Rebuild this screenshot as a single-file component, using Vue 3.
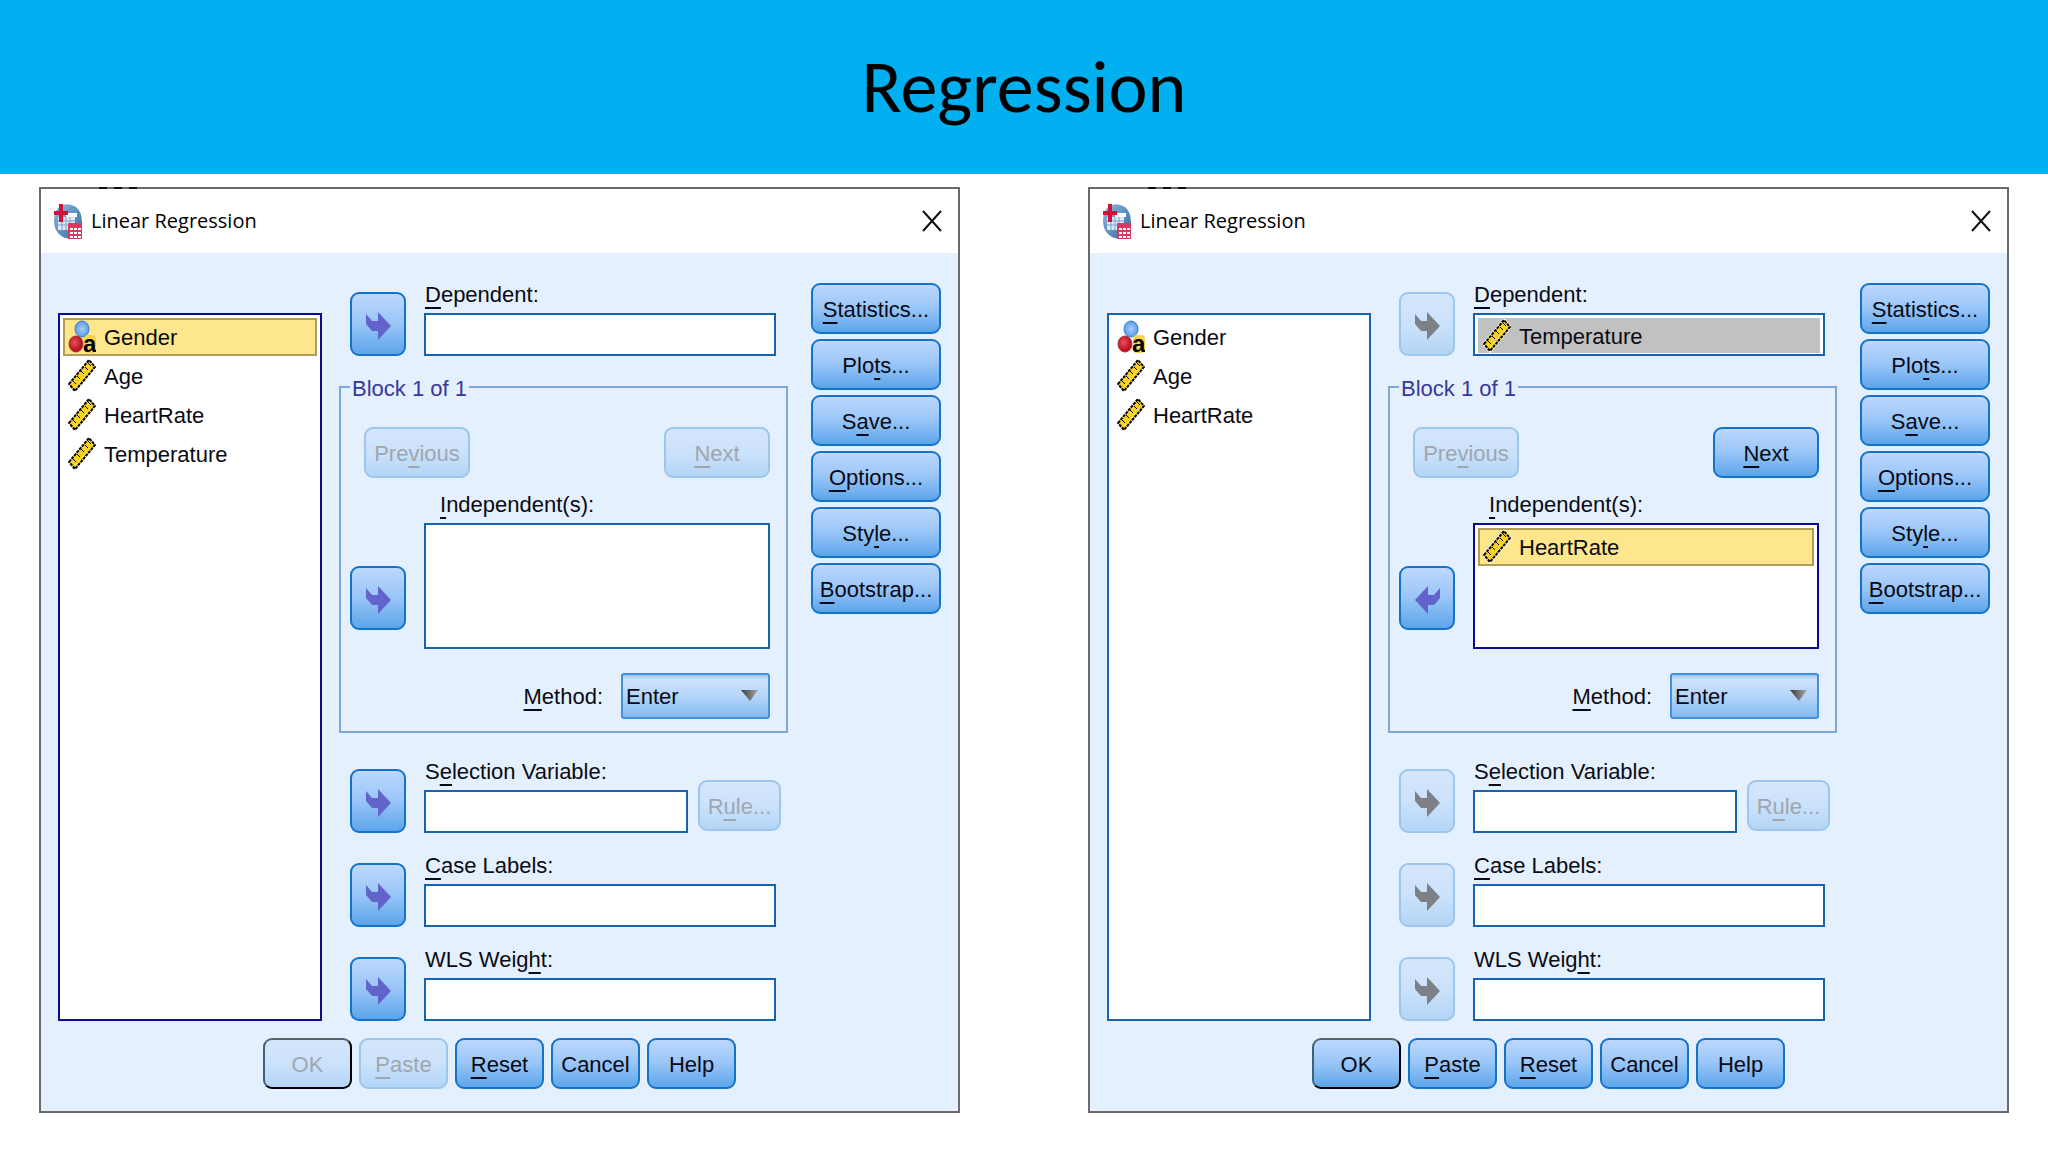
<script setup>
const sideButtons = [
  ['', 'S', 'tatistics...'],
  ['Plo', 't', 's...'],
  ['S', 'a', 've...'],
  ['', 'O', 'ptions...'],
  ['Sty', 'l', 'e...'],
  ['', 'B', 'ootstrap...'],
]

const dialogs = [
  {
    id: 'empty',
    variables: ['Gender', 'Age', 'HeartRate', 'Temperature'],
    selected: 'Gender',
    listActive: true,
    dependent: null,
    independents: [],
    assigned: false,
  },
  {
    id: 'filled',
    variables: ['Gender', 'Age', 'HeartRate'],
    selected: null,
    listActive: false,
    dependent: 'Temperature',
    independents: ['HeartRate'],
    assigned: true,
  },
]

const extraFields = [
  { key: 'selection', parts: ['S', 'e', 'lection Variable:'], rule: true },
  { key: 'cases', parts: ['', 'C', 'ase Labels:'], rule: false },
  { key: 'wls', parts: ['WLS Weig', 'h', 't:'], rule: false },
]

const footer = (d) => [
  { parts: ['OK', '', ''], disabled: !d.assigned, primary: true },
  { parts: ['', 'P', 'aste'], disabled: !d.assigned },
  { parts: ['', 'R', 'eset'] },
  { parts: ['Cancel', '', ''] },
  { parts: ['Help', '', ''] },
]

const arrowPath = 'M0 2 L6 9 L12 9 L12 0 L25 14 L12 28 L12 19 L6 19 L0 12 Z'
</script>

<template>
  <svg class="defs" aria-hidden="true">
    <defs>
      <linearGradient id="globe" x1="0" y1="0" x2="1" y2="1">
        <stop offset="0" stop-color="#8fb9de" />
        <stop offset="1" stop-color="#2f6ba5" />
      </linearGradient>
      <radialGradient id="ballBlue">
        <stop offset="0" stop-color="#a9cdfa" />
        <stop offset="1" stop-color="#5b9cea" />
      </radialGradient>
      <radialGradient id="ballRed" cx="0.4" cy="0.4">
        <stop offset="0" stop-color="#e8505a" />
        <stop offset="1" stop-color="#b8141f" />
      </radialGradient>
      <linearGradient id="caret" x1="0" y1="0" x2="1" y2="0">
        <stop offset="0" stop-color="#3c3c3c" />
        <stop offset="1" stop-color="#a8a8a8" />
      </linearGradient>
      <symbol id="nominal" viewBox="0 0 28 34">
        <ellipse cx="14" cy="9" rx="7" ry="8" fill="url(#ballBlue)" stroke="#3d7fd0" />
        <ellipse cx="8" cy="24" rx="7" ry="8" fill="url(#ballRed)" stroke="#a8323a" />
        <rect x="16" y="15" width="12" height="18" rx="4" fill="#f3d64c" />
        <text x="15" y="32" font-family="Liberation Sans, Arial, sans-serif" font-weight="bold" font-size="24">a</text>
      </symbol>
      <symbol id="scale" viewBox="0 0 28 34">
        <path d="M1 25 L21 1 L27 8 L7 32 Z" fill="#f7d21e" stroke="#fff" stroke-width="3" />
        <path d="M1 25 L21 1 L27 8 L7 32 Z" fill="#f7d21e" stroke="#000" stroke-width="2" stroke-dasharray="3 1" />
        <path d="M5 22 L8 25 M9 17 L12 20 M13 12 L16 15 M17 8 L20 11 M20 4 L23 7" stroke="#000" stroke-width="1" />
        <path d="M8 28 L24 9" stroke="#fff3a0" stroke-width="1" stroke-dasharray="2 3" />
      </symbol>
    </defs>
  </svg>

  <main class="slide">
    <header class="banner"><h1>Regression</h1></header>

    <div class="stage">
      <section v-for="d in dialogs" :key="d.id" class="dialog" :aria-labelledby="d.id + '-title'">
        <span class="specks" aria-hidden="true"><i></i><i></i><i></i></span>
        <div class="titlebar">
          <svg class="logo" viewBox="0 0 28 35" aria-hidden="true">
            <path d="M6 2 Q14 -2 22 3 Q28 8 28 18 Q28 29 20 34 Q12 36 6 31 Q0 26 0 17 Q0 7 6 2 Z" fill="url(#globe)" />
            <rect x="4" y="13" width="17" height="13" fill="#dbe9f7" />
            <rect x="12" y="9" width="11" height="4" fill="#fff" />
            <path d="M4 17 H21 M4 21 H21 M8 13 V26 M12 13 V26 M16 13 V26" stroke="#7aa3cc" />
            <path d="M5 0 H9 V7 H14 V11 H9 V18 H5 V11 H0 V7 H5 Z" fill="#cf1238" />
            <rect x="14" y="19" width="14" height="16" fill="#d93a62" />
            <path d="M16 25 H27 M16 29 H27 M16 33 H27" stroke="#fff" stroke-width="2" stroke-dasharray="3 1" />
          </svg>
          <h2 :id="d.id + '-title'">Linear Regression</h2>
          <button class="close" type="button" aria-label="Close">
            <svg viewBox="0 0 20 22" aria-hidden="true">
              <path d="M1 1 L19 21 M19 1 L1 21" stroke="#111" stroke-width="2" fill="none" />
            </svg>
          </button>
        </div>

        <div class="body">
          <div class="columns">
            <ul class="list variables" :class="{ active: d.listActive }" aria-label="Variables">
              <li v-for="v in d.variables" :key="v" :class="{ selected: v === d.selected }">
                <svg class="measure" aria-hidden="true"><use :href="v === 'Gender' ? '#nominal' : '#scale'" /></svg>
                <span>{{ v }}</span>
              </li>
            </ul>

            <div class="middle">
              <div class="row">
                <button class="btn arrow" type="button" :disabled="d.assigned" aria-label="Move to Dependent">
                  <svg viewBox="0 0 25 28" aria-hidden="true"><path :d="arrowPath" /></svg>
                </button>
                <div class="field">
                  <label :id="d.id + '-dep-label'" :for="d.id + '-dep'"><u>D</u>ependent:</label>
                  <ul v-if="d.dependent" class="list single" :aria-labelledby="d.id + '-dep-label'">
                    <li class="muted">
                      <svg class="measure" aria-hidden="true"><use href="#scale" /></svg>
                      <span>{{ d.dependent }}</span>
                    </li>
                  </ul>
                  <input v-else :id="d.id + '-dep'" type="text" />
                </div>
              </div>

              <fieldset>
                <legend>Block 1 of 1</legend>
                <div class="pager">
                  <button class="btn" type="button" disabled><span>Pre<u>v</u>ious</span></button>
                  <button class="btn" type="button" :disabled="!d.assigned"><span><u>N</u>ext</span></button>
                </div>
                <div class="independent">
                  <button class="btn arrow" type="button" aria-label="Move to Independents">
                    <svg viewBox="0 0 25 28" :class="{ back: d.assigned }" aria-hidden="true"><path :d="arrowPath" /></svg>
                  </button>
                  <div class="field">
                    <span :id="d.id + '-ind'" class="caption"><u>I</u>ndependent(s):</span>
                    <ul class="list targets" :class="{ active: d.assigned }" :aria-labelledby="d.id + '-ind'">
                      <li v-for="v in d.independents" :key="v" class="selected">
                        <svg class="measure" aria-hidden="true"><use href="#scale" /></svg>
                        <span>{{ v }}</span>
                      </li>
                    </ul>
                  </div>
                </div>
                <div class="method">
                  <label :for="d.id + '-method'"><u>M</u>ethod:</label>
                  <div class="select">
                    <select :id="d.id + '-method'"><option>Enter</option></select>
                    <svg viewBox="0 0 17 11" aria-hidden="true"><path d="M0 0 H17 L9 11 Z" fill="url(#caret)" /></svg>
                  </div>
                </div>
              </fieldset>

              <div class="extras">
                <div v-for="f in extraFields" :key="f.key" class="row">
                  <button class="btn arrow" type="button" :disabled="d.assigned" :aria-label="'Move to ' + f.parts.join('')">
                    <svg viewBox="0 0 25 28" aria-hidden="true"><path :d="arrowPath" /></svg>
                  </button>
                  <div class="field">
                    <label :for="d.id + '-' + f.key">{{ f.parts[0] }}<u>{{ f.parts[1] }}</u>{{ f.parts[2] }}</label>
                    <input :id="d.id + '-' + f.key" type="text" />
                  </div>
                  <button v-if="f.rule" class="btn rule" type="button" disabled><span>R<u>u</u>le...</span></button>
                </div>
              </div>
            </div>

            <div class="side">
              <button v-for="b in sideButtons" :key="b.join('')" class="btn" type="button">
                <span>{{ b[0] }}<u>{{ b[1] }}</u>{{ b[2] }}</span>
              </button>
            </div>
          </div>

          <div class="footer">
            <button
              v-for="b in footer(d)"
              :key="b.parts.join('')"
              class="btn"
              :class="{ primary: b.primary }"
              type="button"
              :disabled="b.disabled"
            >
              <span>{{ b.parts[0] }}<u>{{ b.parts[1] }}</u>{{ b.parts[2] }}</span>
            </button>
          </div>
        </div>
      </section>
    </div>
  </main>
</template>

<style>
body {
  background: #fff;
}
</style>

<style scoped>
* {
  box-sizing: border-box;
}
.defs {
  position: absolute;
  width: 0;
  height: 0;
}
.slide,
.slide button,
.slide input,
.slide select {
  font-family: 'Liberation Sans', Arial, sans-serif;
  font-size: 22px;
  line-height: 30px;
  color: #0a0a14;
}
.slide {
  min-height: 100vh;
}
.banner {
  display: flex;
  align-items: center;
  justify-content: center;
  height: 174px;
  background: #00b0f0;
}
h1 {
  margin: 0;
  font: 400 74px/90px Carlito, Lato, sans-serif;
  color: #000;
}
.stage {
  display: flex;
  gap: 128px;
  padding: 13px 39px 39px;
}
.dialog {
  position: relative;
  flex: 1;
  min-width: 0;
  border: 2px solid #6c6a6e;
  background: #fff;
}
.specks {
  position: absolute;
  top: -2px;
  left: 58px;
  display: flex;
  gap: 7px;
}
.specks i {
  width: 8px;
  height: 2px;
  background: #111;
}
.titlebar {
  display: flex;
  align-items: center;
  height: 64px;
  padding: 0 16px 0 13px;
}
.logo {
  width: 28px;
  height: 35px;
}
h2 {
  flex: 1;
  margin: 0 0 0 9px;
  font: 400 20px/30px 'Open Sans', 'Noto Sans', sans-serif;
  color: #000;
}
.close {
  display: flex;
  padding: 0;
  border: 0;
  background: none;
}
.close svg {
  width: 20px;
  height: 22px;
}
.body {
  padding: 0 17px 22px;
  background: #e4f0fe;
}
.columns {
  display: flex;
}
.list {
  display: flex;
  flex-direction: column;
  gap: 1px;
  margin: 0;
  padding: 3px;
  border: 2px solid #1763b0;
  background: #fff;
  list-style: none;
}
.list.active {
  border-color: #0a0a96;
}
.list li {
  display: flex;
  align-items: center;
  gap: 8px;
  height: 38px;
  padding: 0 3px;
  border: 2px solid transparent;
}
.list li span {
  padding-top: 2px;
}
.list li.selected {
  border-color: #b09d58;
  background: #fde68c;
}
.list li.muted {
  height: 35px;
  background: #c1c1c1;
}
.measure {
  width: 28px;
  height: 34px;
  flex: none;
}
.variables {
  width: 264px;
  margin-top: 60px;
  margin-right: 17px;
}
.middle {
  flex: 1;
  min-width: 0;
  padding-top: 27px;
}
.row {
  display: flex;
  align-items: flex-end;
  padding: 0 12px 0 11px;
}
.field {
  display: flex;
  flex: 1;
  flex-direction: column;
  gap: 3px;
  min-width: 0;
  margin-left: 18px;
}
.field label {
  padding-left: 1px;
}
.field .caption {
  padding-left: 16px;
}
u {
  text-decoration: underline 2px;
  text-underline-offset: 5px;
  text-decoration-skip-ink: none;
}
.field input,
.single {
  width: 100%;
  height: 43px;
  border: 2px solid #1763b0;
  border-radius: 0;
  background: #fff;
}
.btn {
  display: flex;
  align-items: center;
  justify-content: center;
  height: 51px;
  padding: 3px 0 0;
  border: 2px solid #1373ca;
  border-radius: 9px;
  background: linear-gradient(#bdd8fd, #98c5f8 50%, #5da5e9);
  white-space: nowrap;
}
.slide .btn:disabled {
  border-color: #9cc6ec;
  background: linear-gradient(#d5e6fc, #cbe2fb 50%, #b3d5f6);
  color: #9fa6ae;
}
.slide .btn.primary {
  border-color: #566468 #000 #000 #3f6278;
}
.arrow {
  flex: none;
  width: 56px;
  height: 64px;
}
.arrow svg {
  width: 25px;
  height: 28px;
  fill: #6363cc;
}
.arrow:disabled svg {
  fill: #7d8084;
}
.arrow svg.back {
  transform: scaleX(-1);
}
fieldset {
  min-width: 0;
  margin: 14px 0 24px;
  padding: 0 16px 12px 9px;
  border: 2px solid #7ba7d9;
}
legend {
  padding: 4px 2px 0;
  color: #38389c;
}
.pager {
  display: flex;
  justify-content: space-between;
  margin: 23px 0 12px 14px;
}
.pager .btn {
  width: 106px;
}
.independent {
  display: flex;
  align-items: flex-end;
}
.independent .arrow {
  margin-bottom: 19px;
}
.targets {
  height: 126px;
}
.method {
  display: flex;
  align-items: center;
  justify-content: flex-end;
  gap: 18px;
  margin-top: 24px;
}
.method label {
  padding-top: 2px;
}
.select {
  position: relative;
  width: 149px;
}
.select select {
  display: block;
  width: 100%;
  height: 46px;
  padding: 2px 0 0 3px;
  border: 2px solid #4390dc;
  border-radius: 3px;
  background: linear-gradient(#9cc4f0, #cfe3fc 5px, #b4d5fa 50%, #86bbf0);
  appearance: none;
}
.select svg {
  position: absolute;
  top: 17px;
  right: 12px;
  width: 17px;
  height: 11px;
  pointer-events: none;
}
.extras {
  display: flex;
  flex-direction: column;
  gap: 18px;
}
.rule {
  width: 83px;
  margin: 0 -5px 2px 10px;
}
.side {
  display: flex;
  flex-direction: column;
  gap: 5px;
  width: 130px;
  margin-left: 23px;
  padding-top: 30px;
}
.footer {
  display: flex;
  justify-content: center;
  gap: 7px;
  margin-top: 17px;
}
.footer .btn {
  width: 89px;
}
</style>
